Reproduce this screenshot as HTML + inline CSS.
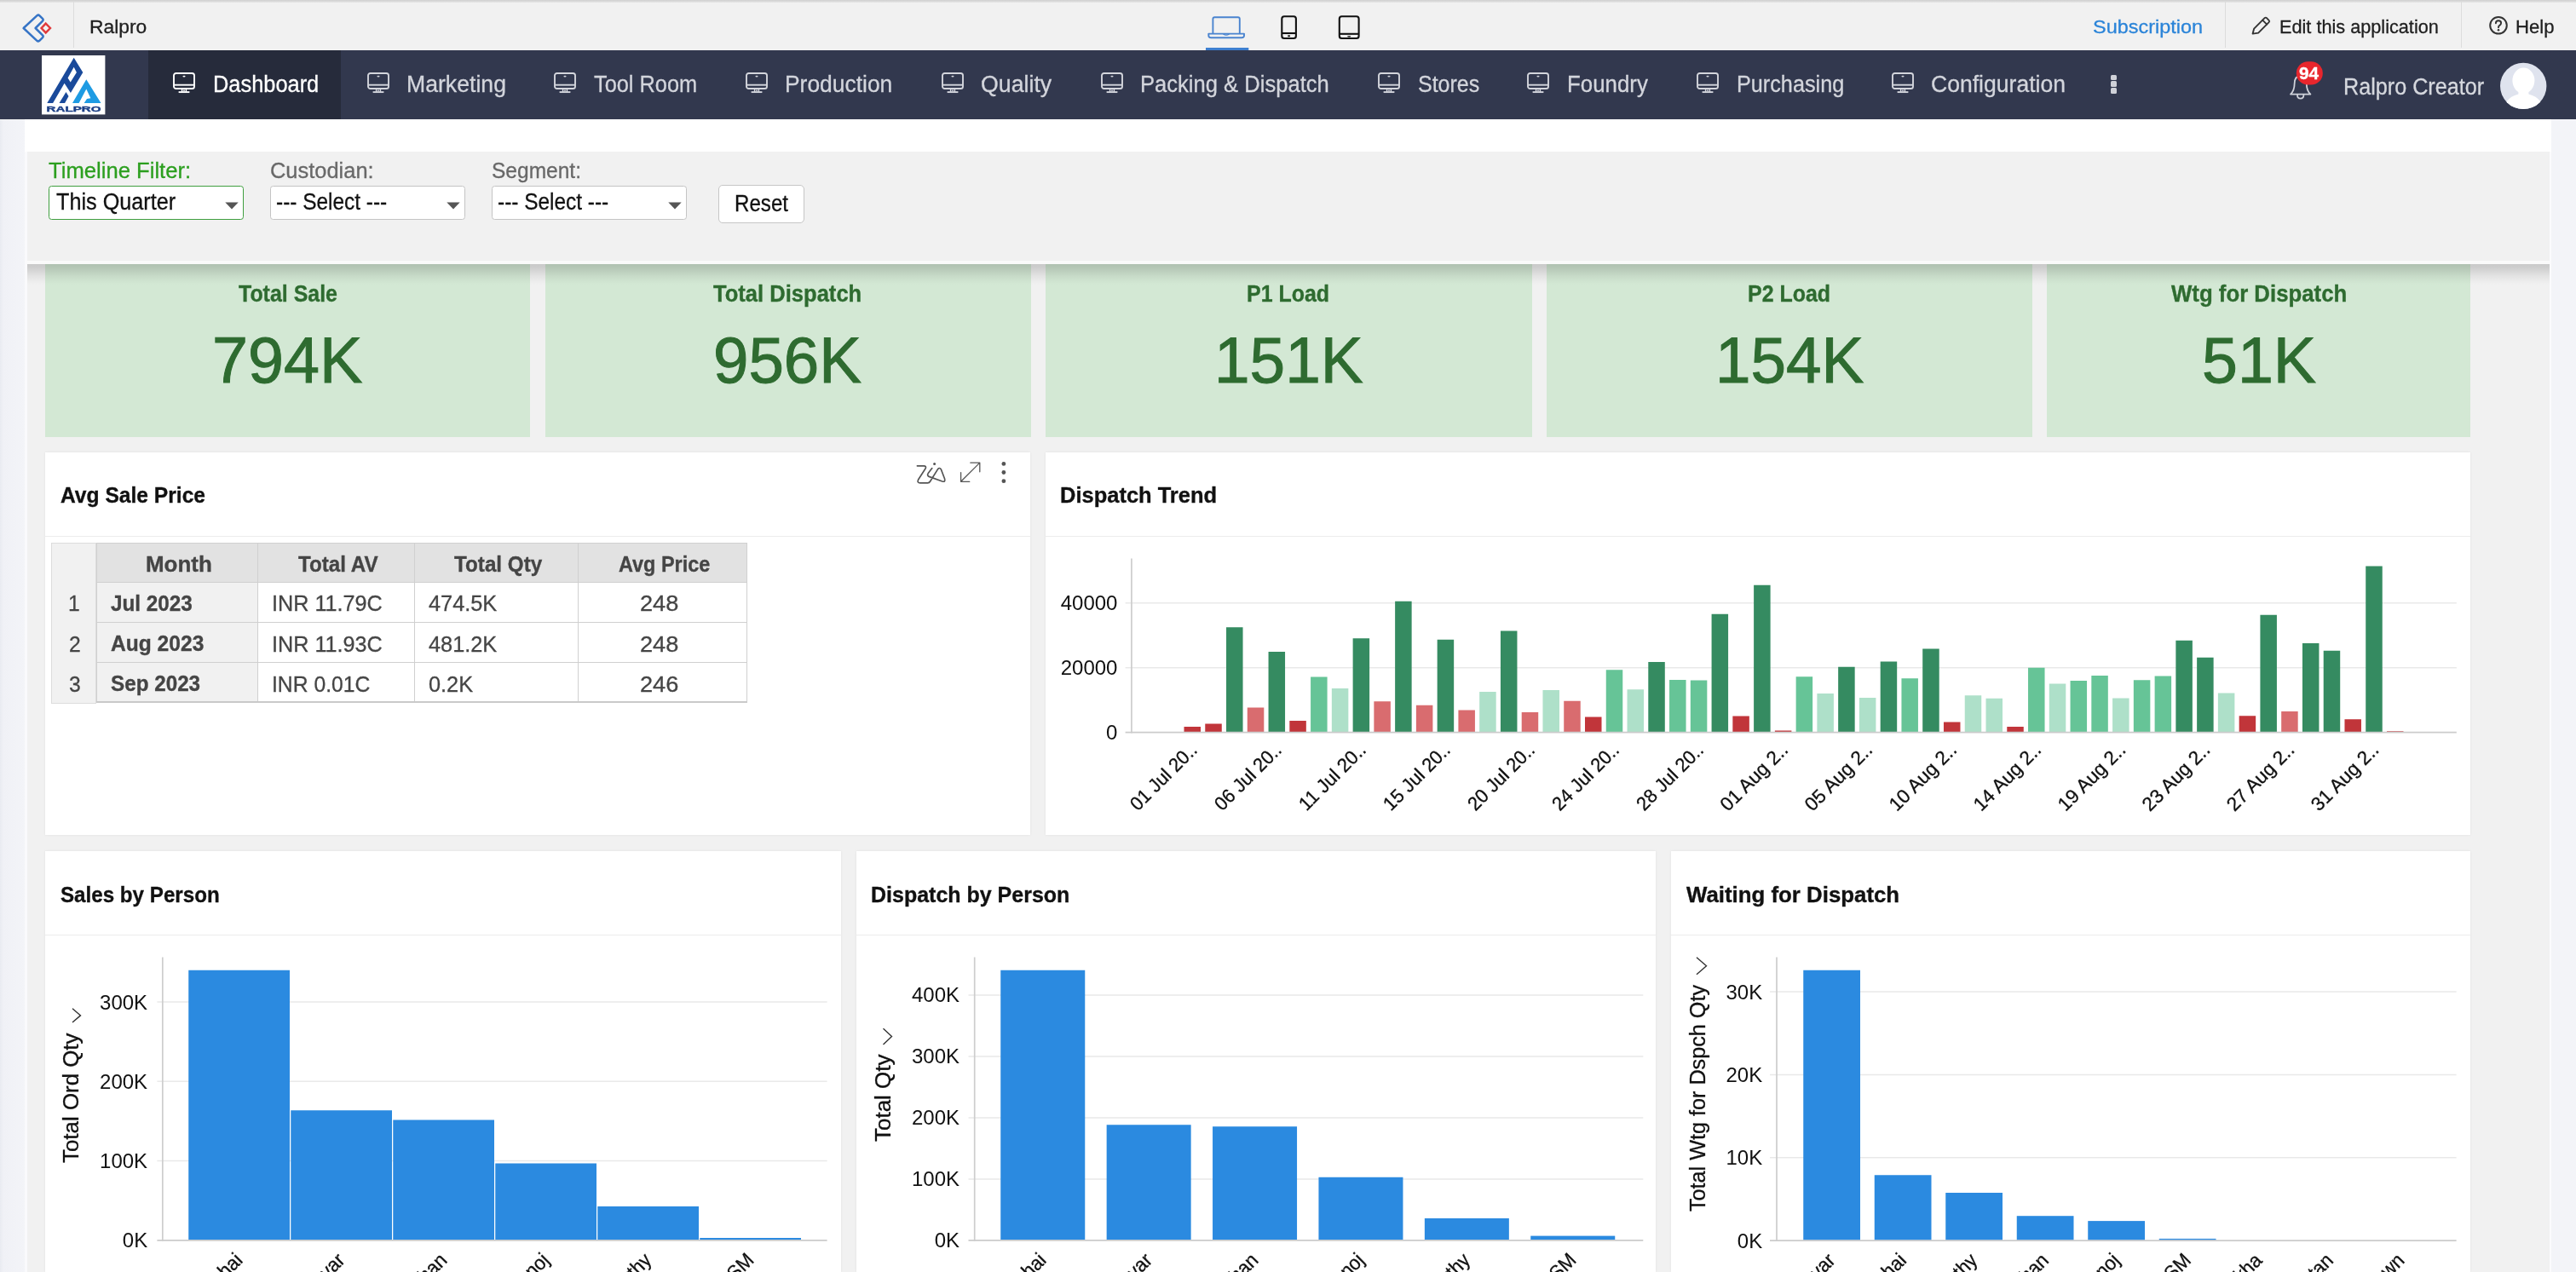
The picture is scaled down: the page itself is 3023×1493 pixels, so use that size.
<!DOCTYPE html>
<html lang="en"><head><meta charset="utf-8"><title>Ralpro - Dashboard</title>
<style>
html,body{margin:0;padding:0;overflow:hidden;}
body{width:3023px;height:1493px;overflow:hidden;position:relative;background:#f1f1f1;font-family:"Liberation Sans",sans-serif;}
#app{position:absolute;left:0;top:0;width:3023px;height:1493px;overflow:hidden;will-change:transform;}
.b{position:absolute;display:block;}
.kv{-webkit-text-stroke:1.0px #2e6b30;}
.t{position:absolute;white-space:nowrap;line-height:1;transform-origin:0 0;display:block;}
svg{overflow:visible;}
svg text{font-family:"Liberation Sans",sans-serif;}
</style></head><body>
<div id="app">
<div class="b topbar" style="left:0.00px;top:0.00px;width:3023.00px;height:59.00px;background:#f1f1f1;"></div>
<div class="b " style="left:0.00px;top:0.00px;width:3023.00px;height:2.50px;background:linear-gradient(#cfcfcf,#e6e6e6);"></div>
<div class="b " style="left:86.00px;top:2.00px;width:1.30px;height:54.00px;background:#dcdcdc;"></div>
<svg class="b" style="left:24px;top:14px" width="40" height="38" viewBox="24 14 40 38">
<path d="M27.6 33 L43.6 18.2 Q45 17 46.4 18.3 L50 21.9 Q51.3 23.3 50 24.6 L41.6 33 L50 41.4 Q51.3 42.7 50 44.1 L46.2 47.8 Q44.8 49 43.4 47.8 Z" fill="none" stroke="#3674c6" stroke-width="2.5" stroke-linejoin="round"/>
<path d="M53.7 27.6 L59 33 L53.7 38.4 L48.6 33 Z" fill="none" stroke="#e03a3c" stroke-width="2.4" stroke-linejoin="miter"/>
</svg>
<span class="t " style="left:104.67px;top:20.97px;font-size:22.60px;color:#1f1f1f;transform:scaleX(1.0103);-webkit-text-stroke-width:0.3px;">Ralpro</span>
<svg class="b" style="left:1410px;top:14px" width="200" height="46" viewBox="1410 14 200 46">
<g fill="none" stroke="#4a84cf" stroke-width="1.9" stroke-linejoin="round">
<path d="M1423.4 39.6 V22.3 Q1423.4 20.3 1425.4 20.3 H1452.8 Q1454.8 20.3 1454.8 22.3 V39.6"/>
<path d="M1418.3 39.6 H1460 V41.4 Q1460 44.2 1457 44.2 H1421.3 Q1418.3 44.2 1418.3 41.4 Z"/>
<path d="M1435.5 40 Q1439 42.3 1442.5 40" stroke-width="1.4"/>
</g>
<rect x="1415" y="56" width="50.3" height="3.2" fill="#3d7fd0"/>
<g fill="none" stroke="#111" stroke-width="2.1">
<rect x="1504.3" y="19.2" width="16.6" height="25.8" rx="2.8"/>
<path d="M1504.3 39 H1520.9"/>
<rect x="1571.8" y="19.2" width="22.8" height="25.8" rx="2.8"/>
<path d="M1571.8 39.8 H1594.6"/>
</g>
<ellipse cx="1512.6" cy="42.2" rx="1.6" ry="1" fill="#111"/>
<ellipse cx="1583.2" cy="42.7" rx="2.2" ry="0.8" fill="#111"/>
</svg>
<span class="t " style="left:2455.94px;top:20.77px;font-size:22.60px;color:#2b84d8;transform:scaleX(1.0375);-webkit-text-stroke-width:0.3px;">Subscription</span>
<div class="b " style="left:2611.00px;top:2.00px;width:1.30px;height:54.00px;background:#dcdcdc;"></div>
<svg class="b" style="left:2640px;top:16px" width="28" height="28" viewBox="2640 16 28 28">
<g fill="none" stroke="#333" stroke-width="1.9" stroke-linejoin="round" stroke-linecap="round">
<path d="M2643.6 39.6 L2645.2 33.6 L2657.6 21.2 Q2658.8 20 2660 21.2 L2662.6 23.8 Q2663.8 25 2662.6 26.2 L2650.2 38.6 Z"/>
<path d="M2655.2 23.6 L2660.2 28.6"/>
</g></svg>
<span class="t " style="left:2675.07px;top:20.77px;font-size:22.60px;color:#1f1f1f;transform:scaleX(0.9596);-webkit-text-stroke-width:0.3px;">Edit this application</span>
<div class="b " style="left:2888.00px;top:2.00px;width:1.30px;height:54.00px;background:#dcdcdc;"></div>
<svg class="b" style="left:2918px;top:16px" width="28" height="28" viewBox="2918 16 28 28">
<circle cx="2932" cy="29.8" r="9.8" fill="none" stroke="#333" stroke-width="2"/>
<path d="M2928.9 27.3 Q2928.9 24.3 2932 24.3 Q2935.1 24.3 2935.1 27 Q2935.1 28.8 2933.3 29.8 Q2932 30.6 2932 32.2" fill="none" stroke="#333" stroke-width="1.9" stroke-linecap="round"/>
<circle cx="2932" cy="35.2" r="1.25" fill="#333"/>
</svg>
<span class="t " style="left:2951.83px;top:20.77px;font-size:22.60px;color:#1f1f1f;transform:scaleX(0.9787);-webkit-text-stroke-width:0.3px;">Help</span>
<div class="b nav" style="left:0.00px;top:59.00px;width:3023.00px;height:80.60px;background:#32384e;"></div>
<div class="b " style="left:0.00px;top:59.00px;width:174.00px;height:82.00px;background:#32384e;border-radius:0 0 5px 0;"></div>
<div class="b " style="left:173.80px;top:59.00px;width:225.80px;height:80.60px;background:#262b3b;"></div>
<svg class="b" style="left:49px;top:64.5px" width="74.4" height="69.4" viewBox="49 64.5 74.4 69.4">
<rect x="49" y="64.5" width="74.4" height="69.4" fill="#fff"/>
<path d="M55.3 120.4 L86.7 67.3 L97.3 84.5 L82.9 108.6 L75.6 97.2 L62.1 120.4 Z M86.7 78.2 L79.6 90.9 L82.7 96.1 L89.9 84.5 Z" fill="#1a4a9b" fill-rule="evenodd"/>
<path d="M77.5 107.6 L80.5 112.6 L76.1 120.4 L69.5 120.4 Z" fill="#1a4a9b"/>
<path d="M85 120.4 L101.3 92.8 L118.5 120.4 L98.7 120.4 L102 115.4 L106.4 114.8 L101.3 104.1 L92.6 120.4 Z" fill="#1e9be3"/>
<text x="54.6" y="130.6" font-family="Liberation Sans, sans-serif" font-weight="bold" font-size="8.3" fill="#1c3f86" stroke="#1c3f86" stroke-width="0.35" textLength="64" lengthAdjust="spacingAndGlyphs">RALPRO</text>
</svg>
<svg class="b" style="left:202.00px;top:83.90px" width="28" height="26" viewBox="-1 -1 28 26">
<g fill="none" stroke="#ffffff" stroke-width="1.9">
<rect x="1" y="1" width="24" height="18" rx="2.6"/>
<path d="M1 14.7 H25"/>
<path d="M6.6 23.1 H19.4"/>
<path d="M10.6 19 V23 M15.4 19 V23" stroke-width="1.5"/>
</g>
<ellipse cx="13" cy="4.6" rx="1.6" ry="0.9" fill="#ffffff"/>
<circle cx="13" cy="21.2" r="0.9" fill="#ffffff"/>
</svg>
<span class="t " style="left:249.77px;top:85.64px;font-size:27.00px;color:#ffffff;transform:scaleX(0.9404);-webkit-text-stroke-width:0.3px;">Dashboard</span>
<svg class="b" style="left:430.00px;top:83.90px" width="28" height="26" viewBox="-1 -1 28 26">
<g fill="none" stroke="#d3d5dc" stroke-width="1.9">
<rect x="1" y="1" width="24" height="18" rx="2.6"/>
<path d="M1 14.7 H25"/>
<path d="M6.6 23.1 H19.4"/>
<path d="M10.6 19 V23 M15.4 19 V23" stroke-width="1.5"/>
</g>
<ellipse cx="13" cy="4.6" rx="1.6" ry="0.9" fill="#d3d5dc"/>
<circle cx="13" cy="21.2" r="0.9" fill="#d3d5dc"/>
</svg>
<span class="t " style="left:477.07px;top:85.64px;font-size:27.00px;color:#d3d5dc;transform:scaleX(0.9865);-webkit-text-stroke-width:0.3px;">Marketing</span>
<svg class="b" style="left:649.00px;top:83.90px" width="28" height="26" viewBox="-1 -1 28 26">
<g fill="none" stroke="#d3d5dc" stroke-width="1.9">
<rect x="1" y="1" width="24" height="18" rx="2.6"/>
<path d="M1 14.7 H25"/>
<path d="M6.6 23.1 H19.4"/>
<path d="M10.6 19 V23 M15.4 19 V23" stroke-width="1.5"/>
</g>
<ellipse cx="13" cy="4.6" rx="1.6" ry="0.9" fill="#d3d5dc"/>
<circle cx="13" cy="21.2" r="0.9" fill="#d3d5dc"/>
</svg>
<span class="t " style="left:697.49px;top:85.64px;font-size:27.00px;color:#d3d5dc;transform:scaleX(0.9387);-webkit-text-stroke-width:0.3px;">Tool Room</span>
<svg class="b" style="left:874.00px;top:83.90px" width="28" height="26" viewBox="-1 -1 28 26">
<g fill="none" stroke="#d3d5dc" stroke-width="1.9">
<rect x="1" y="1" width="24" height="18" rx="2.6"/>
<path d="M1 14.7 H25"/>
<path d="M6.6 23.1 H19.4"/>
<path d="M10.6 19 V23 M15.4 19 V23" stroke-width="1.5"/>
</g>
<ellipse cx="13" cy="4.6" rx="1.6" ry="0.9" fill="#d3d5dc"/>
<circle cx="13" cy="21.2" r="0.9" fill="#d3d5dc"/>
</svg>
<span class="t " style="left:921.29px;top:85.64px;font-size:27.00px;color:#d3d5dc;transform:scaleX(0.9786);-webkit-text-stroke-width:0.3px;">Production</span>
<svg class="b" style="left:1103.50px;top:83.90px" width="28" height="26" viewBox="-1 -1 28 26">
<g fill="none" stroke="#d3d5dc" stroke-width="1.9">
<rect x="1" y="1" width="24" height="18" rx="2.6"/>
<path d="M1 14.7 H25"/>
<path d="M6.6 23.1 H19.4"/>
<path d="M10.6 19 V23 M15.4 19 V23" stroke-width="1.5"/>
</g>
<ellipse cx="13" cy="4.6" rx="1.6" ry="0.9" fill="#d3d5dc"/>
<circle cx="13" cy="21.2" r="0.9" fill="#d3d5dc"/>
</svg>
<span class="t " style="left:1151.40px;top:85.64px;font-size:27.00px;color:#d3d5dc;transform:scaleX(0.9897);-webkit-text-stroke-width:0.3px;">Quality</span>
<svg class="b" style="left:1291.00px;top:83.90px" width="28" height="26" viewBox="-1 -1 28 26">
<g fill="none" stroke="#d3d5dc" stroke-width="1.9">
<rect x="1" y="1" width="24" height="18" rx="2.6"/>
<path d="M1 14.7 H25"/>
<path d="M6.6 23.1 H19.4"/>
<path d="M10.6 19 V23 M15.4 19 V23" stroke-width="1.5"/>
</g>
<ellipse cx="13" cy="4.6" rx="1.6" ry="0.9" fill="#d3d5dc"/>
<circle cx="13" cy="21.2" r="0.9" fill="#d3d5dc"/>
</svg>
<span class="t " style="left:1338.35px;top:85.64px;font-size:27.00px;color:#d3d5dc;transform:scaleX(0.9474);-webkit-text-stroke-width:0.3px;">Packing &amp; Dispatch</span>
<svg class="b" style="left:1616.00px;top:83.90px" width="28" height="26" viewBox="-1 -1 28 26">
<g fill="none" stroke="#d3d5dc" stroke-width="1.9">
<rect x="1" y="1" width="24" height="18" rx="2.6"/>
<path d="M1 14.7 H25"/>
<path d="M6.6 23.1 H19.4"/>
<path d="M10.6 19 V23 M15.4 19 V23" stroke-width="1.5"/>
</g>
<ellipse cx="13" cy="4.6" rx="1.6" ry="0.9" fill="#d3d5dc"/>
<circle cx="13" cy="21.2" r="0.9" fill="#d3d5dc"/>
</svg>
<span class="t " style="left:1663.68px;top:85.64px;font-size:27.00px;color:#d3d5dc;transform:scaleX(0.9253);-webkit-text-stroke-width:0.3px;">Stores</span>
<svg class="b" style="left:1791.40px;top:83.90px" width="28" height="26" viewBox="-1 -1 28 26">
<g fill="none" stroke="#d3d5dc" stroke-width="1.9">
<rect x="1" y="1" width="24" height="18" rx="2.6"/>
<path d="M1 14.7 H25"/>
<path d="M6.6 23.1 H19.4"/>
<path d="M10.6 19 V23 M15.4 19 V23" stroke-width="1.5"/>
</g>
<ellipse cx="13" cy="4.6" rx="1.6" ry="0.9" fill="#d3d5dc"/>
<circle cx="13" cy="21.2" r="0.9" fill="#d3d5dc"/>
</svg>
<span class="t " style="left:1838.73px;top:85.64px;font-size:27.00px;color:#d3d5dc;transform:scaleX(0.9574);-webkit-text-stroke-width:0.3px;">Foundry</span>
<svg class="b" style="left:1990.00px;top:83.90px" width="28" height="26" viewBox="-1 -1 28 26">
<g fill="none" stroke="#d3d5dc" stroke-width="1.9">
<rect x="1" y="1" width="24" height="18" rx="2.6"/>
<path d="M1 14.7 H25"/>
<path d="M6.6 23.1 H19.4"/>
<path d="M10.6 19 V23 M15.4 19 V23" stroke-width="1.5"/>
</g>
<ellipse cx="13" cy="4.6" rx="1.6" ry="0.9" fill="#d3d5dc"/>
<circle cx="13" cy="21.2" r="0.9" fill="#d3d5dc"/>
</svg>
<span class="t " style="left:2037.78px;top:85.64px;font-size:27.00px;color:#d3d5dc;transform:scaleX(0.9343);-webkit-text-stroke-width:0.3px;">Purchasing</span>
<svg class="b" style="left:2218.50px;top:83.90px" width="28" height="26" viewBox="-1 -1 28 26">
<g fill="none" stroke="#d3d5dc" stroke-width="1.9">
<rect x="1" y="1" width="24" height="18" rx="2.6"/>
<path d="M1 14.7 H25"/>
<path d="M6.6 23.1 H19.4"/>
<path d="M10.6 19 V23 M15.4 19 V23" stroke-width="1.5"/>
</g>
<ellipse cx="13" cy="4.6" rx="1.6" ry="0.9" fill="#d3d5dc"/>
<circle cx="13" cy="21.2" r="0.9" fill="#d3d5dc"/>
</svg>
<span class="t " style="left:2266.07px;top:85.64px;font-size:27.00px;color:#d3d5dc;transform:scaleX(0.9838);-webkit-text-stroke-width:0.3px;">Configuration</span>
<div class="b " style="left:2477.20px;top:87.60px;width:7.20px;height:6.60px;background:#cfd1d8;border-radius:1.5px;"></div>
<div class="b " style="left:2477.20px;top:95.40px;width:7.20px;height:6.60px;background:#cfd1d8;border-radius:1.5px;"></div>
<div class="b " style="left:2477.20px;top:103.20px;width:7.20px;height:6.60px;background:#cfd1d8;border-radius:1.5px;"></div>
<svg class="b" style="left:2682px;top:68px" width="50" height="54" viewBox="2682 68 50 54">
<g fill="none" stroke="#cfd2da" stroke-width="1.8" stroke-linejoin="round" stroke-linecap="round">
<path d="M2688 110.6 Q2692.6 106 2692.6 98.4 Q2692.6 89.4 2699.6 89 Q2706.8 89.4 2706.8 98.4 Q2706.8 106 2711.4 110.6 Z"/>
<path d="M2696 111.4 Q2696 115.6 2699.7 115.6 Q2703.4 115.6 2703.4 111.4"/>
</g>
<rect x="2694.8" y="72.2" width="31" height="27.4" rx="13.7" fill="#e8262d"/>
</svg>
<span class="t " style="left:2698.18px;top:76.15px;font-size:20.50px;color:#fff;transform:scaleX(1.0117);font-weight:bold;-webkit-text-stroke-width:0.35px;">94</span>
<span class="t " style="left:2750.19px;top:88.64px;font-size:27.00px;color:#d6d8de;transform:scaleX(0.9327);-webkit-text-stroke-width:0.3px;">Ralpro Creator</span>
<svg class="b" style="left:2933px;top:73px" width="56" height="56" viewBox="2933 73 56 56">
<defs><clipPath id="avc"><circle cx="2961.2" cy="100.9" r="27.2"/></clipPath></defs>
<circle cx="2961.2" cy="100.9" r="27.2" fill="#dfe3ee"/>
<g clip-path="url(#avc)" fill="#fff">
<ellipse cx="2961.4" cy="94.6" rx="13" ry="15"/>
<path d="M2955.4 104 V110.4 Q2946 113 2942 118.6 Q2939.6 123 2939.2 131 H2983.6 Q2983.2 123 2980.8 118.6 Q2976.8 113 2967.4 110.4 V104 Z"/>
</g></svg>
<div class="b " style="left:0.00px;top:139.60px;width:3023.00px;height:1353.40px;background:#f1f1f1;"></div>
<div class="b " style="left:0.00px;top:141.00px;width:29.20px;height:1352.00px;background:linear-gradient(90deg,#e9ebf1 0,#f0f1f6 14%,#f3f4f8 100%);"></div>
<div class="b " style="left:29.20px;top:141.00px;width:3.00px;height:1352.00px;background:#fafafc;"></div>
<div class="b " style="left:2994.40px;top:139.60px;width:28.60px;height:1353.40px;background:#f3f4f8;"></div>
<div class="b " style="left:2991.80px;top:139.60px;width:2.60px;height:1353.40px;background:#fbfbfd;"></div>
<div class="b " style="left:29.20px;top:139.60px;width:2965.20px;height:38.20px;background:#fff;"></div>
<div class="b card" style="left:52.50px;top:300.00px;width:569.50px;height:212.50px;background:#d3e8d4;"></div>
<span class="t " style="left:279.75px;top:332.24px;font-size:27.00px;color:#2e6b30;transform:scaleX(0.9239);font-weight:bold;-webkit-text-stroke-width:0.35px;">Total Sale</span>
<span class="t kv" style="left:249.02px;top:385.84px;font-size:75.20px;color:#2e6b30;transform:scaleX(1.0043);">794K</span>
<div class="b card" style="left:640.00px;top:300.00px;width:570.00px;height:212.50px;background:#d3e8d4;"></div>
<span class="t " style="left:837.34px;top:332.24px;font-size:27.00px;color:#2e6b30;transform:scaleX(0.9467);font-weight:bold;-webkit-text-stroke-width:0.35px;">Total Dispatch</span>
<span class="t kv" style="left:837.45px;top:385.84px;font-size:75.20px;color:#2e6b30;transform:scaleX(0.9905);">956K</span>
<div class="b card" style="left:1227.00px;top:300.00px;width:571.00px;height:212.50px;background:#d3e8d4;"></div>
<span class="t " style="left:1463.38px;top:332.24px;font-size:27.00px;color:#2e6b30;transform:scaleX(0.9240);font-weight:bold;-webkit-text-stroke-width:0.35px;">P1 Load</span>
<span class="t kv" style="left:1425.19px;top:385.84px;font-size:75.20px;color:#2e6b30;transform:scaleX(0.9942);">151K</span>
<div class="b card" style="left:1814.50px;top:300.00px;width:570.00px;height:212.50px;background:#d3e8d4;"></div>
<span class="t " style="left:2050.78px;top:332.24px;font-size:27.00px;color:#2e6b30;transform:scaleX(0.9240);font-weight:bold;-webkit-text-stroke-width:0.35px;">P2 Load</span>
<span class="t kv" style="left:2013.01px;top:385.84px;font-size:75.20px;color:#2e6b30;transform:scaleX(0.9919);">154K</span>
<div class="b card" style="left:2402.00px;top:300.00px;width:497.00px;height:212.50px;background:#d3e8d4;"></div>
<span class="t " style="left:2547.80px;top:332.24px;font-size:27.00px;color:#2e6b30;transform:scaleX(0.9548);font-weight:bold;-webkit-text-stroke-width:0.35px;">Wtg for Dispatch</span>
<span class="t kv" style="left:2583.98px;top:385.84px;font-size:75.20px;color:#2e6b30;transform:scaleX(1.0023);">51K</span>
<div class="b filter" style="left:32.20px;top:177.80px;width:2959.60px;height:131.80px;background:#f1f1f1;"></div>
<div class="b " style="left:32.20px;top:309.70px;width:2959.60px;height:24.30px;background:linear-gradient(rgba(0,0,0,0.165) 0,rgba(0,0,0,0.15) 14%,rgba(0,0,0,0.105) 36%,rgba(0,0,0,0.055) 60%,rgba(0,0,0,0.018) 84%,rgba(0,0,0,0) 100%);"></div>
<div class="b " style="left:32.20px;top:306.20px;width:2959.60px;height:3.50px;background:#fafafa;"></div>
<span class="t " style="left:57.49px;top:186.92px;font-size:26.20px;color:#2c9f1f;transform:scaleX(0.9789);-webkit-text-stroke-width:0.3px;">Timeline Filter:</span>
<span class="t " style="left:316.73px;top:186.92px;font-size:26.20px;color:#686868;transform:scaleX(0.9712);-webkit-text-stroke-width:0.3px;">Custodian:</span>
<span class="t " style="left:576.50px;top:186.92px;font-size:26.20px;color:#686868;transform:scaleX(0.9363);-webkit-text-stroke-width:0.3px;">Segment:</span>
<div class="b " style="left:57.00px;top:218.00px;width:228.80px;height:39.60px;background:#fff;border:1.3px solid #3f9f3f;border-radius:3.5px;box-sizing:border-box;"></div>
<span class="t " style="left:65.50px;top:223.84px;font-size:27.00px;color:#111;transform:scaleX(0.9345);-webkit-text-stroke-width:0.3px;">This Quarter</span>
<svg class="b" style="left:264.20px;top:236.6px" width="16" height="9" viewBox="0 0 16 9"><path d="M0.3 0.4 H15.7 L8 8.4 Z" fill="#555"/></svg>
<div class="b " style="left:317.00px;top:218.00px;width:228.60px;height:39.60px;background:#fff;border:1.3px solid #c4c4c4;border-radius:3.5px;box-sizing:border-box;"></div>
<span class="t " style="left:324.42px;top:223.84px;font-size:27.00px;color:#111;transform:scaleX(0.9044);-webkit-text-stroke-width:0.3px;">--- Select ---</span>
<svg class="b" style="left:524.00px;top:236.6px" width="16" height="9" viewBox="0 0 16 9"><path d="M0.3 0.4 H15.7 L8 8.4 Z" fill="#555"/></svg>
<div class="b " style="left:577.00px;top:218.00px;width:228.60px;height:39.60px;background:#fff;border:1.3px solid #c4c4c4;border-radius:3.5px;box-sizing:border-box;"></div>
<span class="t " style="left:584.42px;top:223.84px;font-size:27.00px;color:#111;transform:scaleX(0.9044);-webkit-text-stroke-width:0.3px;">--- Select ---</span>
<svg class="b" style="left:784.00px;top:236.6px" width="16" height="9" viewBox="0 0 16 9"><path d="M0.3 0.4 H15.7 L8 8.4 Z" fill="#555"/></svg>
<div class="b " style="left:843.00px;top:216.80px;width:100.80px;height:44.80px;background:#fff;border:1.3px solid #c6c6c6;border-radius:5px;box-sizing:border-box;"></div>
<span class="t " style="left:862.07px;top:226.34px;font-size:27.00px;color:#111;transform:scaleX(0.8930);-webkit-text-stroke-width:0.3px;">Reset</span>
<div class="b panel" style="left:52.50px;top:530.50px;width:1156.30px;height:449.50px;background:#fff;box-shadow:0 0 3px rgba(0,0,0,0.07);"></div>
<div class="b " style="left:52.50px;top:628.50px;width:1156.30px;height:1.40px;background:#ececec;"></div>
<span class="t " style="left:70.79px;top:568.09px;font-size:26.00px;color:#111;transform:scaleX(0.9460);font-weight:bold;-webkit-text-stroke-width:0.35px;">Avg Sale Price</span>
<div class="b panel" style="left:1227.00px;top:530.50px;width:1672.00px;height:449.50px;background:#fff;box-shadow:0 0 3px rgba(0,0,0,0.07);"></div>
<div class="b " style="left:1227.00px;top:628.50px;width:1672.00px;height:1.40px;background:#ececec;"></div>
<span class="t " style="left:1243.94px;top:568.09px;font-size:26.00px;color:#111;transform:scaleX(0.9801);font-weight:bold;-webkit-text-stroke-width:0.35px;">Dispatch Trend</span>
<svg class="b" style="left:1070px;top:538px" width="120" height="36" viewBox="1070 538 120 36">
<g fill="none" stroke="#555" stroke-width="1.7" stroke-linecap="round" stroke-linejoin="round">
<path d="M1076.4 546.8 H1084 Q1087.6 546.8 1086 550 L1077.6 563 Q1076 566.8 1079.8 566.8 H1088.6 Q1090.6 566.8 1091.6 565 L1100.6 550.6 Q1102.6 548.2 1104.4 551 L1108.6 562 Q1109.6 566.2 1105.8 565 L1090.2 559.4 Q1087.6 558 1089.2 555.6 L1093.8 549.6"/>
<path d="M1127.6 565.3 L1149.8 543.1 M1138.8 543.1 H1149.8 V553.8 M1127.6 554.6 V565.3 H1137.8" stroke-width="1.3"/>
</g>
<circle cx="1096.6" cy="544.6" r="1.5" fill="#555"/>
<circle cx="1177.9" cy="544.4" r="2.4" fill="#555"/><circle cx="1177.9" cy="554.5" r="2.4" fill="#555"/><circle cx="1177.9" cy="564.7" r="2.4" fill="#555"/>
</svg>
<div class="b " style="left:60.00px;top:637.40px;width:53.20px;height:188.80px;background:#f1f1f1;border:1px solid #dcdcdc;box-sizing:border-box;"></div>
<div class="b " style="left:113.00px;top:637.40px;width:764.00px;height:45.80px;background:#e2e2e2;border-top:1px solid #d0d0d0;box-sizing:border-box;"></div>
<div class="b " style="left:113.00px;top:683.00px;width:189.60px;height:140.60px;background:#f1f1f1;"></div>
<div class="b " style="left:302.60px;top:683.00px;width:574.40px;height:140.60px;background:#fff;"></div>
<div class="b " style="left:112.50px;top:637.40px;width:1.00px;height:186.40px;background:#d0d0d0;"></div>
<div class="b " style="left:302.10px;top:637.40px;width:1.00px;height:186.40px;background:#d0d0d0;"></div>
<div class="b " style="left:486.10px;top:637.40px;width:1.00px;height:186.40px;background:#d0d0d0;"></div>
<div class="b " style="left:677.50px;top:637.40px;width:1.00px;height:186.40px;background:#d0d0d0;"></div>
<div class="b " style="left:875.70px;top:637.40px;width:1.00px;height:186.40px;background:#d0d0d0;"></div>
<div class="b " style="left:113.00px;top:682.70px;width:764.00px;height:1.00px;background:#d0d0d0;"></div>
<div class="b " style="left:113.00px;top:729.70px;width:764.00px;height:1.00px;background:#d0d0d0;"></div>
<div class="b " style="left:113.00px;top:776.90px;width:764.00px;height:1.00px;background:#d0d0d0;"></div>
<div class="b " style="left:113.00px;top:822.60px;width:764.00px;height:2.00px;background:#c9c9c9;"></div>
<span class="t " style="left:171.11px;top:649.29px;font-size:26.00px;color:#454545;transform:scaleX(0.9980);font-weight:bold;-webkit-text-stroke-width:0.35px;">Month</span>
<span class="t " style="left:349.56px;top:649.29px;font-size:26.00px;color:#454545;transform:scaleX(0.9299);font-weight:bold;-webkit-text-stroke-width:0.35px;">Total AV</span>
<span class="t " style="left:532.96px;top:649.29px;font-size:26.00px;color:#454545;transform:scaleX(0.9321);font-weight:bold;-webkit-text-stroke-width:0.35px;">Total Qty</span>
<span class="t " style="left:725.81px;top:649.29px;font-size:26.00px;color:#454545;transform:scaleX(0.9020);font-weight:bold;-webkit-text-stroke-width:0.35px;">Avg Price</span>
<span class="t " style="left:80.38px;top:695.49px;font-size:26.00px;color:#454545;transform:scaleX(0.9500);-webkit-text-stroke-width:0.3px;">1</span>
<span class="t " style="left:130.44px;top:695.09px;font-size:26.00px;color:#454545;transform:scaleX(0.9341);font-weight:bold;-webkit-text-stroke-width:0.35px;">Jul 2023</span>
<span class="t " style="left:318.53px;top:695.49px;font-size:26.00px;color:#454545;transform:scaleX(0.9690);-webkit-text-stroke-width:0.3px;">INR 11.79C</span>
<span class="t " style="left:502.89px;top:695.49px;font-size:26.00px;color:#454545;transform:scaleX(0.9735);-webkit-text-stroke-width:0.3px;">474.5K</span>
<span class="t " style="left:751.24px;top:695.49px;font-size:26.00px;color:#454545;transform:scaleX(1.0452);-webkit-text-stroke-width:0.3px;">248</span>
<span class="t " style="left:80.68px;top:742.64px;font-size:26.00px;color:#454545;transform:scaleX(0.9500);-webkit-text-stroke-width:0.3px;">2</span>
<span class="t " style="left:130.19px;top:742.24px;font-size:26.00px;color:#454545;transform:scaleX(0.9455);font-weight:bold;-webkit-text-stroke-width:0.35px;">Aug 2023</span>
<span class="t " style="left:318.53px;top:742.64px;font-size:26.00px;color:#454545;transform:scaleX(0.9690);-webkit-text-stroke-width:0.3px;">INR 11.93C</span>
<span class="t " style="left:502.89px;top:742.64px;font-size:26.00px;color:#454545;transform:scaleX(0.9735);-webkit-text-stroke-width:0.3px;">481.2K</span>
<span class="t " style="left:751.24px;top:742.64px;font-size:26.00px;color:#454545;transform:scaleX(1.0452);-webkit-text-stroke-width:0.3px;">248</span>
<span class="t " style="left:80.81px;top:789.79px;font-size:26.00px;color:#454545;transform:scaleX(0.9500);-webkit-text-stroke-width:0.3px;">3</span>
<span class="t " style="left:130.19px;top:789.39px;font-size:26.00px;color:#454545;transform:scaleX(0.9321);font-weight:bold;-webkit-text-stroke-width:0.35px;">Sep 2023</span>
<span class="t " style="left:318.58px;top:789.79px;font-size:26.00px;color:#454545;transform:scaleX(0.9505);-webkit-text-stroke-width:0.3px;">INR 0.01C</span>
<span class="t " style="left:502.51px;top:789.79px;font-size:26.00px;color:#454545;transform:scaleX(0.9735);-webkit-text-stroke-width:0.3px;">0.2K</span>
<span class="t " style="left:751.24px;top:789.79px;font-size:26.00px;color:#454545;transform:scaleX(1.0452);-webkit-text-stroke-width:0.3px;">246</span>
<svg class="b" style="left:1227px;top:630px" width="1672" height="350" viewBox="1227 630 1672 350" font-family="Liberation Sans, sans-serif">
<path d="M1320.6 707.8 H2882.8" stroke="#e9e9e9" stroke-width="1.5"/>
<path d="M1320.6 783.8 H2882.8" stroke="#e9e9e9" stroke-width="1.5"/>
<rect x="1389.50" y="853.00" width="19.5" height="6.00" fill="#c1353a"/>
<rect x="1414.26" y="849.50" width="19.5" height="9.50" fill="#c1353a"/>
<rect x="1439.03" y="736.25" width="19.5" height="122.75" fill="#358b61"/>
<rect x="1463.79" y="830.50" width="19.5" height="28.50" fill="#d96c6f"/>
<rect x="1488.55" y="765.00" width="19.5" height="94.00" fill="#358b61"/>
<rect x="1513.32" y="846.00" width="19.5" height="13.00" fill="#c1353a"/>
<rect x="1538.08" y="794.50" width="19.5" height="64.50" fill="#66c497"/>
<rect x="1562.84" y="808.00" width="19.5" height="51.00" fill="#aee0c9"/>
<rect x="1587.61" y="749.25" width="19.5" height="109.75" fill="#358b61"/>
<rect x="1612.37" y="823.25" width="19.5" height="35.75" fill="#d96c6f"/>
<rect x="1637.13" y="705.75" width="19.5" height="153.25" fill="#358b61"/>
<rect x="1661.89" y="827.75" width="19.5" height="31.25" fill="#d96c6f"/>
<rect x="1686.66" y="750.75" width="19.5" height="108.25" fill="#358b61"/>
<rect x="1711.42" y="833.50" width="19.5" height="25.50" fill="#d96c6f"/>
<rect x="1736.18" y="812.00" width="19.5" height="47.00" fill="#aee0c9"/>
<rect x="1760.95" y="740.50" width="19.5" height="118.50" fill="#358b61"/>
<rect x="1785.71" y="836.00" width="19.5" height="23.00" fill="#d96c6f"/>
<rect x="1810.47" y="810.00" width="19.5" height="49.00" fill="#aee0c9"/>
<rect x="1835.24" y="822.75" width="19.5" height="36.25" fill="#d96c6f"/>
<rect x="1860.00" y="841.50" width="19.5" height="17.50" fill="#c1353a"/>
<rect x="1884.76" y="786.25" width="19.5" height="72.75" fill="#66c497"/>
<rect x="1909.53" y="809.25" width="19.5" height="49.75" fill="#aee0c9"/>
<rect x="1934.29" y="777.00" width="19.5" height="82.00" fill="#358b61"/>
<rect x="1959.05" y="798.00" width="19.5" height="61.00" fill="#66c497"/>
<rect x="1983.82" y="798.50" width="19.5" height="60.50" fill="#66c497"/>
<rect x="2008.58" y="720.75" width="19.5" height="138.25" fill="#358b61"/>
<rect x="2033.34" y="840.50" width="19.5" height="18.50" fill="#c1353a"/>
<rect x="2058.11" y="686.75" width="19.5" height="172.25" fill="#358b61"/>
<rect x="2082.87" y="857.50" width="19.5" height="1.50" fill="#c1353a"/>
<rect x="2107.63" y="794.25" width="19.5" height="64.75" fill="#66c497"/>
<rect x="2132.39" y="814.00" width="19.5" height="45.00" fill="#aee0c9"/>
<rect x="2157.16" y="782.75" width="19.5" height="76.25" fill="#358b61"/>
<rect x="2181.92" y="819.00" width="19.5" height="40.00" fill="#aee0c9"/>
<rect x="2206.68" y="776.50" width="19.5" height="82.50" fill="#358b61"/>
<rect x="2231.45" y="796.25" width="19.5" height="62.75" fill="#66c497"/>
<rect x="2256.21" y="761.50" width="19.5" height="97.50" fill="#358b61"/>
<rect x="2280.97" y="847.50" width="19.5" height="11.50" fill="#c1353a"/>
<rect x="2305.74" y="816.25" width="19.5" height="42.75" fill="#aee0c9"/>
<rect x="2330.50" y="819.75" width="19.5" height="39.25" fill="#aee0c9"/>
<rect x="2355.26" y="853.00" width="19.5" height="6.00" fill="#c1353a"/>
<rect x="2380.03" y="783.75" width="19.5" height="75.25" fill="#66c497"/>
<rect x="2404.79" y="802.50" width="19.5" height="56.50" fill="#aee0c9"/>
<rect x="2429.55" y="799.00" width="19.5" height="60.00" fill="#66c497"/>
<rect x="2454.32" y="793.00" width="19.5" height="66.00" fill="#66c497"/>
<rect x="2479.08" y="819.50" width="19.5" height="39.50" fill="#aee0c9"/>
<rect x="2503.84" y="798.25" width="19.5" height="60.75" fill="#66c497"/>
<rect x="2528.61" y="793.50" width="19.5" height="65.50" fill="#66c497"/>
<rect x="2553.37" y="751.75" width="19.5" height="107.25" fill="#358b61"/>
<rect x="2578.13" y="771.75" width="19.5" height="87.25" fill="#358b61"/>
<rect x="2602.89" y="813.50" width="19.5" height="45.50" fill="#aee0c9"/>
<rect x="2627.66" y="840.25" width="19.5" height="18.75" fill="#c1353a"/>
<rect x="2652.42" y="721.75" width="19.5" height="137.25" fill="#358b61"/>
<rect x="2677.18" y="835.00" width="19.5" height="24.00" fill="#d96c6f"/>
<rect x="2701.95" y="755.00" width="19.5" height="104.00" fill="#358b61"/>
<rect x="2726.71" y="763.75" width="19.5" height="95.25" fill="#358b61"/>
<rect x="2751.47" y="844.25" width="19.5" height="14.75" fill="#c1353a"/>
<rect x="2776.24" y="664.50" width="19.5" height="194.50" fill="#358b61"/>
<rect x="2801.00" y="858.30" width="19.5" height="0.70" fill="#c1353a"/>
<path d="M1327.9 655.5 V860.4" stroke="#cdcdcd" stroke-width="1.7"/>
<path d="M1320.6 859.6 H2882.8" stroke="#cbcbcb" stroke-width="1.7"/>
<text x="1244.72" y="716.30" font-size="24" fill="#111">40000</text>
<text x="1244.72" y="792.30" font-size="24" fill="#111">20000</text>
<text x="1298.12" y="868.10" font-size="24" fill="#111">0</text>
<text transform="translate(1406.25 881.60) rotate(-45)" x="-100.50" y="0" font-size="22.6" fill="#111" stroke="#111" stroke-width="0.3" textLength="100.5" lengthAdjust="spacingAndGlyphs">01 Jul 20..</text>
<text transform="translate(1505.30 881.60) rotate(-45)" x="-100.50" y="0" font-size="22.6" fill="#111" stroke="#111" stroke-width="0.3" textLength="100.5" lengthAdjust="spacingAndGlyphs">06 Jul 20..</text>
<text transform="translate(1604.36 881.60) rotate(-45)" x="-100.50" y="0" font-size="22.6" fill="#111" stroke="#111" stroke-width="0.3" textLength="100.5" lengthAdjust="spacingAndGlyphs">11 Jul 20..</text>
<text transform="translate(1703.41 881.60) rotate(-45)" x="-100.50" y="0" font-size="22.6" fill="#111" stroke="#111" stroke-width="0.3" textLength="100.5" lengthAdjust="spacingAndGlyphs">15 Jul 20..</text>
<text transform="translate(1802.46 881.60) rotate(-45)" x="-100.50" y="0" font-size="22.6" fill="#111" stroke="#111" stroke-width="0.3" textLength="100.5" lengthAdjust="spacingAndGlyphs">20 Jul 20..</text>
<text transform="translate(1901.51 881.60) rotate(-45)" x="-100.50" y="0" font-size="22.6" fill="#111" stroke="#111" stroke-width="0.3" textLength="100.5" lengthAdjust="spacingAndGlyphs">24 Jul 20..</text>
<text transform="translate(2000.57 881.60) rotate(-45)" x="-100.50" y="0" font-size="22.6" fill="#111" stroke="#111" stroke-width="0.3" textLength="100.5" lengthAdjust="spacingAndGlyphs">28 Jul 20..</text>
<text transform="translate(2099.62 881.60) rotate(-45)" x="-101.50" y="0" font-size="22.6" fill="#111" stroke="#111" stroke-width="0.3" textLength="101.5" lengthAdjust="spacingAndGlyphs">01 Aug 2..</text>
<text transform="translate(2198.67 881.60) rotate(-45)" x="-101.50" y="0" font-size="22.6" fill="#111" stroke="#111" stroke-width="0.3" textLength="101.5" lengthAdjust="spacingAndGlyphs">05 Aug 2..</text>
<text transform="translate(2297.72 881.60) rotate(-45)" x="-101.50" y="0" font-size="22.6" fill="#111" stroke="#111" stroke-width="0.3" textLength="101.5" lengthAdjust="spacingAndGlyphs">10 Aug 2..</text>
<text transform="translate(2396.78 881.60) rotate(-45)" x="-101.50" y="0" font-size="22.6" fill="#111" stroke="#111" stroke-width="0.3" textLength="101.5" lengthAdjust="spacingAndGlyphs">14 Aug 2..</text>
<text transform="translate(2495.83 881.60) rotate(-45)" x="-101.50" y="0" font-size="22.6" fill="#111" stroke="#111" stroke-width="0.3" textLength="101.5" lengthAdjust="spacingAndGlyphs">19 Aug 2..</text>
<text transform="translate(2594.88 881.60) rotate(-45)" x="-101.50" y="0" font-size="22.6" fill="#111" stroke="#111" stroke-width="0.3" textLength="101.5" lengthAdjust="spacingAndGlyphs">23 Aug 2..</text>
<text transform="translate(2693.93 881.60) rotate(-45)" x="-101.50" y="0" font-size="22.6" fill="#111" stroke="#111" stroke-width="0.3" textLength="101.5" lengthAdjust="spacingAndGlyphs">27 Aug 2..</text>
<text transform="translate(2792.99 881.60) rotate(-45)" x="-101.50" y="0" font-size="22.6" fill="#111" stroke="#111" stroke-width="0.3" textLength="101.5" lengthAdjust="spacingAndGlyphs">31 Aug 2..</text>
</svg>
<div class="b panel" style="left:53.00px;top:999.00px;width:934.00px;height:494.00px;background:#fff;box-shadow:0 0 3px rgba(0,0,0,0.07);"></div>
<div class="b " style="left:53.00px;top:1096.90px;width:934.00px;height:1.40px;background:#ececec;"></div>
<span class="t " style="left:71.00px;top:1036.89px;font-size:26.00px;color:#111;transform:scaleX(0.9293);font-weight:bold;-webkit-text-stroke-width:0.35px;">Sales by Person</span>
<div class="b panel" style="left:1004.50px;top:999.00px;width:938.50px;height:494.00px;background:#fff;box-shadow:0 0 3px rgba(0,0,0,0.07);"></div>
<div class="b " style="left:1004.50px;top:1096.90px;width:938.50px;height:1.40px;background:#ececec;"></div>
<span class="t " style="left:1022.18px;top:1036.89px;font-size:26.00px;color:#111;transform:scaleX(0.9613);font-weight:bold;-webkit-text-stroke-width:0.35px;">Dispatch by Person</span>
<div class="b panel" style="left:1961.00px;top:999.00px;width:938.00px;height:494.00px;background:#fff;box-shadow:0 0 3px rgba(0,0,0,0.07);"></div>
<div class="b " style="left:1961.00px;top:1096.90px;width:938.00px;height:1.40px;background:#ececec;"></div>
<span class="t " style="left:1979.40px;top:1036.89px;font-size:26.00px;color:#111;transform:scaleX(0.9934);font-weight:bold;-webkit-text-stroke-width:0.35px;">Waiting for Dispatch</span>
<svg class="b" style="left:53px;top:1099px" width="934" height="394" viewBox="53 1099 934 394" font-family="Liberation Sans, sans-serif">
<path d="M184.4 1362.60 H970.6" stroke="#e9e9e9" stroke-width="1.5"/>
<path d="M184.4 1269.30 H970.6" stroke="#e9e9e9" stroke-width="1.5"/>
<path d="M184.4 1176.00 H970.6" stroke="#e9e9e9" stroke-width="1.5"/>
<rect x="221.25" y="1138.75" width="118.75" height="316.55" fill="#2b8ae0"/>
<rect x="341.25" y="1303.25" width="118.75" height="152.05" fill="#2b8ae0"/>
<rect x="461.25" y="1314.50" width="118.75" height="140.80" fill="#2b8ae0"/>
<rect x="581.25" y="1365.50" width="118.75" height="89.80" fill="#2b8ae0"/>
<rect x="701.25" y="1416.00" width="118.75" height="39.30" fill="#2b8ae0"/>
<rect x="821.25" y="1453.00" width="118.75" height="2.30" fill="#2b8ae0"/>
<path d="M190.8 1123.4 V1456.70" stroke="#cdcdcd" stroke-width="1.7"/>
<path d="M184.4 1455.90 H970.6" stroke="#cbcbcb" stroke-width="1.7"/>
<text x="143.84" y="1464.40" font-size="24" fill="#111">0K</text>
<text x="117.08" y="1371.10" font-size="24" fill="#111">100K</text>
<text x="117.08" y="1277.80" font-size="24" fill="#111">200K</text>
<text x="117.08" y="1184.50" font-size="24" fill="#111">300K</text>
<text transform="translate(285.93 1480.50) rotate(-45)" x="-109.31" y="0" font-size="23.5" fill="#111" stroke="#111" stroke-width="0.3" textLength="109.31" lengthAdjust="spacingAndGlyphs">Sanjaybhai</text>
<text transform="translate(405.93 1480.50) rotate(-45)" x="-60.16" y="0" font-size="23.5" fill="#111" stroke="#111" stroke-width="0.3" textLength="60.16" lengthAdjust="spacingAndGlyphs">Ishvar</text>
<text transform="translate(525.92 1480.50) rotate(-45)" x="-67.55" y="0" font-size="23.5" fill="#111" stroke="#111" stroke-width="0.3" textLength="67.55" lengthAdjust="spacingAndGlyphs">Kishan</text>
<text transform="translate(645.92 1480.50) rotate(-45)" x="-60.17" y="0" font-size="23.5" fill="#111" stroke="#111" stroke-width="0.3" textLength="60.17" lengthAdjust="spacingAndGlyphs">Manoj</text>
<text transform="translate(765.92 1480.50) rotate(-45)" x="-67.51" y="0" font-size="23.5" fill="#111" stroke="#111" stroke-width="0.3" textLength="67.51" lengthAdjust="spacingAndGlyphs">Murthy</text>
<text transform="translate(885.92 1480.50) rotate(-45)" x="-49.09" y="0" font-size="23.5" fill="#111" stroke="#111" stroke-width="0.3" textLength="49.09" lengthAdjust="spacingAndGlyphs">RSM</text>
<text transform="translate(92 1365) rotate(-90)" x="0" y="0" font-size="25" fill="#111" stroke="#111" stroke-width="0.3" textLength="152.50" lengthAdjust="spacingAndGlyphs">Total Ord Qty</text>
<path d="M85 1183.8 L94.5 1191.9 L85 1200" fill="none" stroke="#333" stroke-width="1.4"/>
</svg>
<svg class="b" style="left:1004.5px;top:1099px" width="938.5" height="394" viewBox="1004.5 1099 938.5 394" font-family="Liberation Sans, sans-serif">
<path d="M1136 1383.90 H1927.8" stroke="#e9e9e9" stroke-width="1.5"/>
<path d="M1136 1311.90 H1927.8" stroke="#e9e9e9" stroke-width="1.5"/>
<path d="M1136 1239.90 H1927.8" stroke="#e9e9e9" stroke-width="1.5"/>
<path d="M1136 1167.90 H1927.8" stroke="#e9e9e9" stroke-width="1.5"/>
<rect x="1173.75" y="1138.75" width="99" height="316.55" fill="#2b8ae0"/>
<rect x="1298.15" y="1320.25" width="99" height="135.05" fill="#2b8ae0"/>
<rect x="1422.55" y="1322.25" width="99" height="133.05" fill="#2b8ae0"/>
<rect x="1546.95" y="1381.75" width="99" height="73.55" fill="#2b8ae0"/>
<rect x="1671.35" y="1430.00" width="99" height="25.30" fill="#2b8ae0"/>
<rect x="1795.75" y="1450.60" width="99" height="4.70" fill="#2b8ae0"/>
<path d="M1143.2 1123.4 V1456.70" stroke="#cdcdcd" stroke-width="1.7"/>
<path d="M1136 1455.90 H1927.8" stroke="#cbcbcb" stroke-width="1.7"/>
<text x="1096.24" y="1464.40" font-size="24" fill="#111">0K</text>
<text x="1069.48" y="1392.40" font-size="24" fill="#111">100K</text>
<text x="1069.48" y="1320.40" font-size="24" fill="#111">200K</text>
<text x="1069.48" y="1248.40" font-size="24" fill="#111">300K</text>
<text x="1069.48" y="1176.40" font-size="24" fill="#111">400K</text>
<text transform="translate(1228.55 1480.50) rotate(-45)" x="-109.31" y="0" font-size="23.5" fill="#111" stroke="#111" stroke-width="0.3" textLength="109.31" lengthAdjust="spacingAndGlyphs">Sanjaybhai</text>
<text transform="translate(1352.95 1480.50) rotate(-45)" x="-60.16" y="0" font-size="23.5" fill="#111" stroke="#111" stroke-width="0.3" textLength="60.16" lengthAdjust="spacingAndGlyphs">Ishvar</text>
<text transform="translate(1477.35 1480.50) rotate(-45)" x="-67.55" y="0" font-size="23.5" fill="#111" stroke="#111" stroke-width="0.3" textLength="67.55" lengthAdjust="spacingAndGlyphs">Kishan</text>
<text transform="translate(1601.75 1480.50) rotate(-45)" x="-60.17" y="0" font-size="23.5" fill="#111" stroke="#111" stroke-width="0.3" textLength="60.17" lengthAdjust="spacingAndGlyphs">Manoj</text>
<text transform="translate(1726.15 1480.50) rotate(-45)" x="-67.51" y="0" font-size="23.5" fill="#111" stroke="#111" stroke-width="0.3" textLength="67.51" lengthAdjust="spacingAndGlyphs">Murthy</text>
<text transform="translate(1850.55 1480.50) rotate(-45)" x="-49.09" y="0" font-size="23.5" fill="#111" stroke="#111" stroke-width="0.3" textLength="49.09" lengthAdjust="spacingAndGlyphs">RSM</text>
<text transform="translate(1044 1340) rotate(-90)" x="0" y="0" font-size="25" fill="#111" stroke="#111" stroke-width="0.3" textLength="102.50" lengthAdjust="spacingAndGlyphs">Total Qty</text>
<path d="M1036 1207.2 L1046 1216.6 L1036 1226" fill="none" stroke="#333" stroke-width="1.4"/>
</svg>
<svg class="b" style="left:1961px;top:1099px" width="938" height="394" viewBox="1961 1099 938 394" font-family="Liberation Sans, sans-serif">
<path d="M2077 1358.80 H2882.6" stroke="#e9e9e9" stroke-width="1.5"/>
<path d="M2077 1261.40 H2882.6" stroke="#e9e9e9" stroke-width="1.5"/>
<path d="M2077 1164.00 H2882.6" stroke="#e9e9e9" stroke-width="1.5"/>
<rect x="2116.25" y="1138.75" width="66.75" height="316.85" fill="#2b8ae0"/>
<rect x="2199.75" y="1379.25" width="66.75" height="76.35" fill="#2b8ae0"/>
<rect x="2283.25" y="1400.00" width="66.75" height="55.60" fill="#2b8ae0"/>
<rect x="2366.75" y="1427.20" width="66.75" height="28.40" fill="#2b8ae0"/>
<rect x="2450.25" y="1433.10" width="66.75" height="22.50" fill="#2b8ae0"/>
<rect x="2533.75" y="1453.90" width="66.75" height="1.70" fill="#2b8ae0"/>
<path d="M2085 1123.4 V1457.00" stroke="#cdcdcd" stroke-width="1.7"/>
<path d="M2077 1456.20 H2882.6" stroke="#cbcbcb" stroke-width="1.7"/>
<text x="2038.84" y="1464.70" font-size="24" fill="#111">0K</text>
<text x="2025.52" y="1367.30" font-size="24" fill="#111">10K</text>
<text x="2025.52" y="1269.90" font-size="24" fill="#111">20K</text>
<text x="2025.52" y="1172.50" font-size="24" fill="#111">30K</text>
<text transform="translate(2154.93 1480.80) rotate(-45)" x="-60.16" y="0" font-size="23.5" fill="#111" stroke="#111" stroke-width="0.3" textLength="60.16" lengthAdjust="spacingAndGlyphs">Ishvar</text>
<text transform="translate(2238.43 1480.80) rotate(-45)" x="-109.31" y="0" font-size="23.5" fill="#111" stroke="#111" stroke-width="0.3" textLength="109.31" lengthAdjust="spacingAndGlyphs">Sanjaybhai</text>
<text transform="translate(2321.93 1480.80) rotate(-45)" x="-67.51" y="0" font-size="23.5" fill="#111" stroke="#111" stroke-width="0.3" textLength="67.51" lengthAdjust="spacingAndGlyphs">Murthy</text>
<text transform="translate(2405.43 1480.80) rotate(-45)" x="-67.55" y="0" font-size="23.5" fill="#111" stroke="#111" stroke-width="0.3" textLength="67.55" lengthAdjust="spacingAndGlyphs">Kishan</text>
<text transform="translate(2488.93 1480.80) rotate(-45)" x="-60.17" y="0" font-size="23.5" fill="#111" stroke="#111" stroke-width="0.3" textLength="60.17" lengthAdjust="spacingAndGlyphs">Manoj</text>
<text transform="translate(2572.43 1480.80) rotate(-45)" x="-49.09" y="0" font-size="23.5" fill="#111" stroke="#111" stroke-width="0.3" textLength="49.09" lengthAdjust="spacingAndGlyphs">RSM</text>
<text transform="translate(2655.93 1480.80) rotate(-45)" x="-63.86" y="0" font-size="23.5" fill="#111" stroke="#111" stroke-width="0.3" textLength="63.86" lengthAdjust="spacingAndGlyphs">Rekha</text>
<text transform="translate(2739.43 1480.80) rotate(-45)" x="-58.95" y="0" font-size="23.5" fill="#111" stroke="#111" stroke-width="0.3" textLength="58.95" lengthAdjust="spacingAndGlyphs">Ratan</text>
<text transform="translate(2822.93 1480.80) rotate(-45)" x="-92.09" y="0" font-size="23.5" fill="#111" stroke="#111" stroke-width="0.3" textLength="92.09" lengthAdjust="spacingAndGlyphs">Unknown</text>
<text transform="translate(2001 1422) rotate(-90)" x="0" y="0" font-size="25" fill="#111" stroke="#111" stroke-width="0.3" textLength="266.00" lengthAdjust="spacingAndGlyphs">Total Wtg for Dspch Qty</text>
<path d="M1991 1123.8 L2002.5 1133.8 L1991 1143.8" fill="none" stroke="#333" stroke-width="1.4"/>
</svg>
</div>
</body></html>
